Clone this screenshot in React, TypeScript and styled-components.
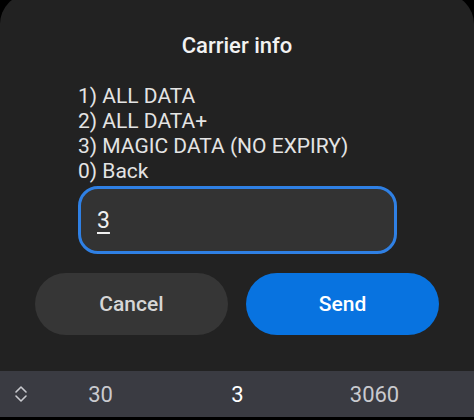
import React, { useState } from 'react'
import styled, { createGlobalStyle } from 'styled-components'

const GlobalStyle = createGlobalStyle`
  html, body {
    margin: 0;
    padding: 0;
    background: #000;
    font-family: Roboto, "Noto Sans", "Liberation Sans", sans-serif;
  }
  * { box-sizing: border-box; }
`

const Screen = styled.div`
  width: 474px;
  height: 420px;
  overflow: hidden;
  display: flex;
  flex-direction: column;
  background: #000;
`

const Dialog = styled.div`
  flex: 1;
  margin-top: -6px;
  padding: 40px 35px 0;
  background: #222222;
  border-radius: 30px 30px 0 0;
  display: flex;
  flex-direction: column;
`

const Title = styled.h2`
  margin: 0;
  height: 24px;
  line-height: 24px;
  text-align: center;
  font-size: 22px;
  font-weight: 500;
  color: #f2f2f2;
`

const Body = styled.div`
  margin: 26px 42px 0 43px;
  display: flex;
  flex-direction: column;
`

const Menu = styled.div`
  font-size: 21px;
  line-height: 25px;
  color: #e4e4e4;
`

const Field = styled.div`
  margin-top: 2px;
  height: 68px;
  border: 3px solid #2f80e4;
  border-radius: 20px;
  background: #333333;
  display: flex;
  align-items: center;
  padding: 0 16px;
`

const Input = styled.input`
  width: 100%;
  border: none;
  outline: none;
  background: transparent;
  color: #f0f0f0;
  font-family: inherit;
  font-size: 23px;
  text-decoration: underline;
  text-decoration-thickness: 1.5px;
  text-underline-offset: 4px;
  padding: 0;
`

const Actions = styled.div`
  margin-top: 19px;
  display: grid;
  grid-template-columns: 1fr 1fr;
  gap: 18px;
`

const Button = styled.button<{ $primary?: boolean }>`
  height: 62px;
  border: none;
  border-radius: 31px;
  font-family: inherit;
  font-size: 21px;
  font-weight: 500;
  color: ${({ $primary }) => ($primary ? '#ffffff' : '#d6d6d6')};
  background: ${({ $primary }) => ($primary ? '#0873e0' : '#363636')};
`

const Bar = styled.div`
  height: 46px;
  margin-bottom: 3px;
  background: #3a3b42;
  display: grid;
  grid-template-columns: 32px repeat(3, 137px) 1fr;
  align-items: center;
`

const Toggle = styled.div`
  display: flex;
  justify-content: center;
  padding-left: 10px;
`

const Suggestion = styled.span<{ $main?: boolean }>`
  text-align: center;
  font-size: 22px;
  color: ${({ $main }) => ($main ? '#ffffff' : '#c9cacf')};
`

const items = ['1) ALL DATA', '2) ALL DATA+', '3) MAGIC DATA (NO EXPIRY)', '0) Back']

export default function App() {
  const [value, setValue] = useState('3')
  return (
    <Screen>
      <GlobalStyle />
      <Dialog>
        <Title>Carrier info</Title>
        <Body>
          <Menu>
            {items.map((item) => (
              <div key={item}>{item}</div>
            ))}
          </Menu>
          <Field>
            <Input value={value} onChange={(e) => setValue(e.target.value)} />
          </Field>
        </Body>
        <Actions>
          <Button>Cancel</Button>
          <Button $primary>Send</Button>
        </Actions>
      </Dialog>
      <Bar>
        <Toggle>
          <svg width="14" height="18" viewBox="0 0 14 18" fill="none" stroke="#c9cacf" strokeWidth="1.6" strokeLinecap="round" strokeLinejoin="round">
            <path d="M2 7 L7 2 L12 7" />
            <path d="M2 11 L7 16 L12 11" />
          </svg>
        </Toggle>
        <Suggestion>30</Suggestion>
        <Suggestion $main>3</Suggestion>
        <Suggestion>3060</Suggestion>
      </Bar>
    </Screen>
  )
}
